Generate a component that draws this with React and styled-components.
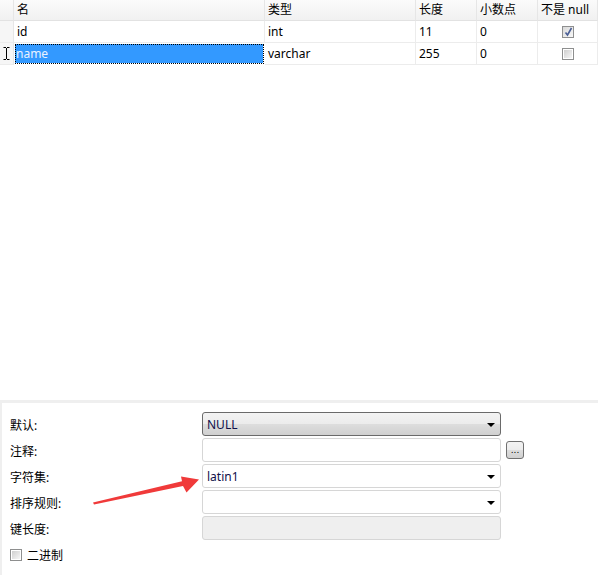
import React from "react";
import styled, { createGlobalStyle } from "styled-components";

const Global = createGlobalStyle`
  html, body {
    margin: 0;
    padding: 0;
    background: #ffffff;
  }
  body {
    font-family: "Noto Sans", "Noto Sans CJK SC", sans-serif;
    font-size: 12px;
    color: #000;
  }
`;

const Page = styled.div`
  position: relative;
  width: 598px;
  height: 575px;
  display: flex;
  flex-direction: column;
  overflow: hidden;
  background: #fff;
`;

const GridPane = styled.div`
  height: 400px;
  background: #fff;
`;

const Table = styled.div`
  display: grid;
  grid-template-columns: 14px 251px 151px 61px 61px 1fr;
  grid-auto-rows: 22px;
  grid-template-rows: 21px;
`;

const HeadCell = styled.div`
  box-sizing: border-box;
  display: flex;
  align-items: center;
  padding-left: 3px;
  border-right: 1px solid #e6e6e6;
  border-bottom: 1px solid #e2e2e2;
  background: linear-gradient(#fbfbfb, #f1f1f1);
  white-space: nowrap;
  line-height: 1;
`;

const RowHead = styled.div`
  box-sizing: border-box;
  display: flex;
  align-items: center;
  justify-content: center;
  border-right: 1px solid #e6e6e6;
  border-bottom: 1px solid #ececec;
  background: #f6f6f6;
`;

const Cell = styled.div`
  box-sizing: border-box;
  display: flex;
  align-items: center;
  justify-content: ${(p) => (p.$center ? "center" : "flex-start")};
  padding-left: ${(p) => (p.$center ? "0" : "3px")};
  border-right: 1px solid #ececec;
  border-bottom: 1px solid #ececec;
  white-space: nowrap;
  ${(p) =>
    p.$selected &&
    `
    padding-left: 2px;
    background: #3399ff;
    color: #eaf2ff;
    outline: 1px dotted #000;
    outline-offset: -2px;
    border-right: 2px solid #fff;
    border-bottom: 2px solid #fff;
    box-shadow: inset 1px 1px 0 #fff;
  `}
`;

const Splitter = styled.div`
  height: 3px;
  background: #efefef;
`;

const Props = styled.div`
  flex: 1;
  border-left: 2px solid #efefef;
  padding: 9px 0 0 8px;
  display: grid;
  grid-template-columns: 192px 299px 24px;
  grid-auto-rows: 24px;
  row-gap: 2px;
  align-items: center;
`;

const Label = styled.div`
  align-self: center;
  padding-top: 1px;
`;

const Combo = styled.div`
  box-sizing: border-box;
  height: 24px;
  display: flex;
  align-items: center;
  justify-content: space-between;
  padding: 0 5px 0 4px;
  border-radius: 3px;
  border: 1px solid ${(p) => (p.$button ? "#6a6a6a" : "#d6d6d6")};
  background: ${(p) =>
    p.$button
      ? "linear-gradient(#f3f3f3, #ececec 48%, #dddddd 52%, #d0d0d0)"
      : p.$disabled
      ? "#efefef"
      : "#fff"};
  color: #10104a;
`;

const Arrow = styled.span`
  width: 0;
  height: 0;
  border-left: 4px solid transparent;
  border-right: 4px solid transparent;
  border-top: 4px solid #000;
  margin-top: 1px;
`;

const DotsButton = styled.button`
  box-sizing: border-box;
  width: 18px;
  height: 18px;
  margin-left: 5px;
  padding: 0 0 3px;
  border: 1px solid #707070;
  border-radius: 3px;
  background: linear-gradient(#f3f3f3, #ececec 48%, #dddddd 52%, #d0d0d0);
  font: 9px "DejaVu Sans", sans-serif;
  line-height: 1;
  display: flex;
  align-items: flex-end;
  justify-content: center;
`;

const CheckRow = styled.label`
  grid-column: 1 / 3;
  margin-top: 1px;
  display: flex;
  align-items: center;
  gap: 5px;
  height: 18px;
`;

const Box = styled.span`
  box-sizing: border-box;
  width: 12px;
  height: 12px;
  border: 1px solid #8e8f8f;
  background: #fff;
  padding: 1px;
  display: flex;

  &::before {
    content: "";
    flex: 1;
    background: linear-gradient(135deg, #cfcfcf, #f6f6f6);
  }
`;

const CheckedBox = styled.span`
  box-sizing: border-box;
  position: relative;
  width: 12px;
  height: 12px;
  border: 1px solid #8e8f8f;
  background: linear-gradient(135deg, #d9d9d9, #f8f8f8);

  svg {
    position: absolute;
    left: 1px;
    top: 0px;
  }
`;

const Overlay = styled.svg`
  position: absolute;
  left: 0;
  top: 0;
  pointer-events: none;
`;

const columns = ["名", "类型", "长度", "小数点", "不是 null"];

const rows = [
  { name: "id", type: "int", len: "11", dec: "0", notNull: true },
  { name: "name", type: "varchar", len: "255", dec: "0", notNull: false, selected: true },
];

const IBeam = () => (
  <svg width="7" height="13" viewBox="0 0 7 13">
    <path d="M0.5 0.5h2.5M4 0.5h2.5M3.5 1v11M0.5 12.5h2.5M4 12.5h2.5" stroke="#000" strokeWidth="1" fill="none" />
  </svg>
);

const Tick = () => (
  <svg width="9" height="10" viewBox="0 0 9 10">
    <path d="M1.5 5.5 L3.5 8 L7.5 1" stroke="#4b5f96" strokeWidth="1.6" fill="none" />
  </svg>
);

const App = () => {
  return (
    <Page>
      <Global />
      <GridPane>
        <Table>
          <HeadCell />
          {columns.map((c) => (
            <HeadCell key={c}>{c}</HeadCell>
          ))}
          {rows.map((r) => (
            <React.Fragment key={r.name}>
              <RowHead>{r.selected && <IBeam />}</RowHead>
              <Cell $selected={r.selected}>{r.name}</Cell>
              <Cell>{r.type}</Cell>
              <Cell>{r.len}</Cell>
              <Cell>{r.dec}</Cell>
              <Cell $center>{r.notNull ? <CheckedBox><Tick /></CheckedBox> : <Box />}</Cell>
            </React.Fragment>
          ))}
        </Table>
      </GridPane>
      <Splitter />
      <Props>
        <Label>默认:</Label>
        <Combo $button>
          <span>NULL</span>
          <Arrow />
        </Combo>
        <span />

        <Label>注释:</Label>
        <Combo />
        <DotsButton>...</DotsButton>

        <Label>字符集:</Label>
        <Combo>
          <span>latin1</span>
          <Arrow />
        </Combo>
        <span />

        <Label>排序规则:</Label>
        <Combo>
          <span />
          <Arrow />
        </Combo>
        <span />

        <Label>键长度:</Label>
        <Combo $disabled />
        <span />

        <CheckRow>
          <Box />
          二进制
        </CheckRow>
      </Props>
      <Overlay width="598" height="575" viewBox="0 0 598 575">
        <polygon
          points="93,502.6 182,481.2 181,476.5 199,479.5 186.5,492.5 183,486 94,504.6"
          fill="#f03a3a"
        />
      </Overlay>
    </Page>
  );
};

export default App;
